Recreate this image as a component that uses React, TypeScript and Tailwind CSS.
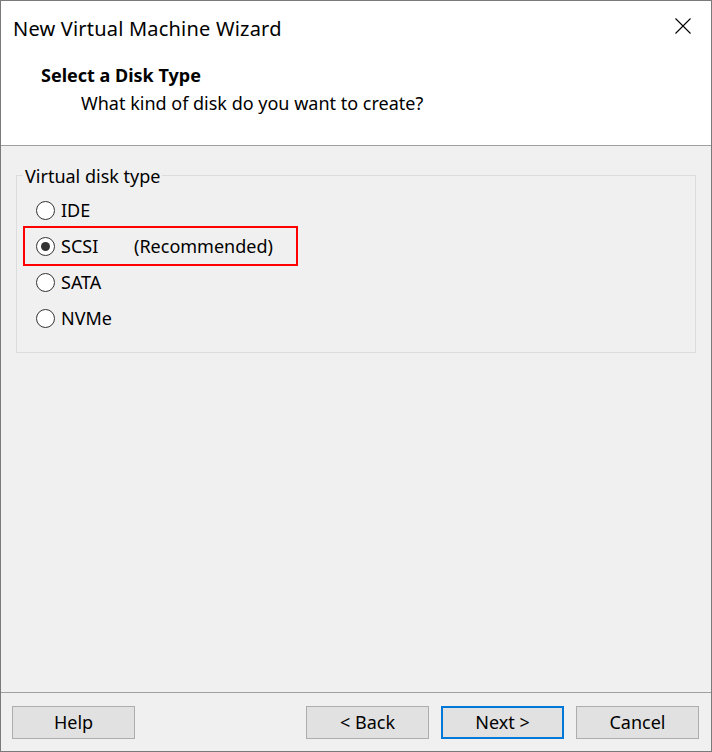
import { useState } from 'react';

const options = [
  { id: 'ide', label: 'IDE' },
  { id: 'scsi', label: 'SCSI', note: '(Recommended)' },
  { id: 'sata', label: 'SATA' },
  { id: 'nvme', label: 'NVMe' },
];

function Radio({ checked }: { checked: boolean }): JSX.Element {
  return (
    <span className="flex h-[19px] w-[19px] shrink-0 items-center justify-center rounded-full border border-[#333333] bg-white">
      {checked && <span className="h-[9px] w-[9px] rounded-full bg-[#333333]" />}
    </span>
  );
}

function WizardButton({ label, isDefault = false }: { label: string; isDefault?: boolean }): JSX.Element {
  return (
    <button
      type="button"
      className={`h-[33px] w-[123px] bg-[#e1e1e1] text-[18px] text-black ${
        isDefault ? 'border-2 border-[#0078d7]' : 'border border-[#adadad]'
      }`}
    >
      {label}
    </button>
  );
}

export default function App(): JSX.Element {
  const [selected, setSelected] = useState('scsi');

  return (
    <div
      className="flex h-[752px] w-[712px] flex-col border border-[#7a7a7a] bg-[#f0f0f0] text-black"
      style={{ fontFamily: '"Noto Sans", "Open Sans", sans-serif' }}
    >
      <header className="flex h-[145px] flex-col border-b border-[#a0a0a0] bg-white">
        <div className="flex items-start justify-between pl-3 pr-5 pt-[14px]">
          <h1 className="text-[20px] leading-[28px] tracking-[0.2px]">New Virtual Machine Wizard</h1>
          <svg width="16" height="16" viewBox="0 0 16 16" className="mt-[3px]" aria-hidden="true">
            <path d="M0.5 0.5L15.5 15.5M15.5 0.5L0.5 15.5" stroke="#000" strokeWidth="1.1" fill="none" />
          </svg>
        </div>
        <div className="pl-10 pt-[20px]">
          <h2 className="text-[18px] font-bold leading-[24px]">Select a Disk Type</h2>
          <p className="pl-10 pt-[4px] text-[18px] leading-[24px]">What kind of disk do you want to create?</p>
        </div>
      </header>

      <main className="flex-1 px-[15px] pt-[29px]">
        <section className="relative h-[178px] border border-[#dcdcdc]">
          <span className="absolute left-[6px] top-[-9px] bg-[#f0f0f0] px-[2px] text-[18px] leading-[18px]">
            Virtual disk type
          </span>
          <div className="flex flex-col gap-[17px] pl-[19px] pt-[25px]">
            {options.map((opt) => (
              <label
                key={opt.id}
                className="flex h-[19px] cursor-default items-center gap-[6px] text-[18px] leading-[19px]"
                onClick={() => setSelected(opt.id)}
              >
                <Radio checked={selected === opt.id} />
                <span className="w-[67px]">{opt.label}</span>
                {opt.note && <span>{opt.note}</span>}
              </label>
            ))}
          </div>
          <div className="pointer-events-none absolute left-[6px] top-[50px] h-[40px] w-[275px] border-2 border-[#ff0000]" />
        </section>
      </main>

      <footer className="flex h-[59px] items-start justify-between border-t border-[#a0a0a0] px-[11px] pt-[13px]">
        <WizardButton label="Help" />
        <div className="flex gap-[12px] pr-[1px]">
          <WizardButton label="< Back" />
          <WizardButton label="Next >" isDefault />
          <WizardButton label="Cancel" />
        </div>
      </footer>
    </div>
  );
}
